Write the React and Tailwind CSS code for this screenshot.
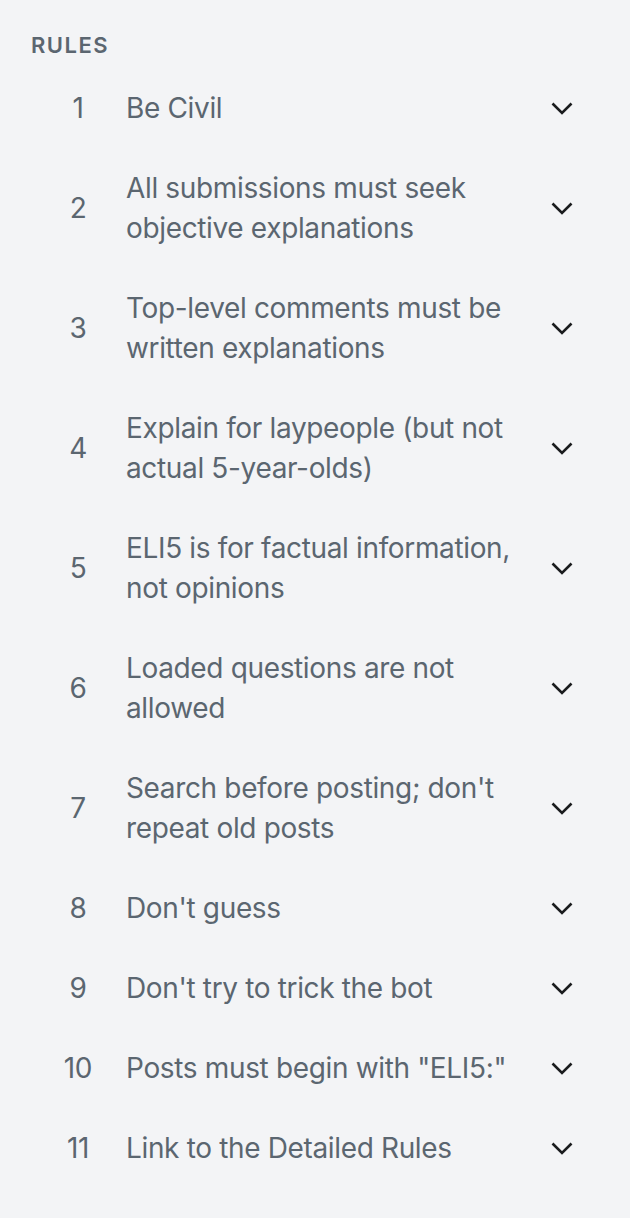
const rules = [
  'Be Civil',
  'All submissions must seek objective explanations',
  'Top-level comments must be written explanations',
  'Explain for laypeople (but not actual 5-year-olds)',
  'ELI5 is for factual information, not opinions',
  'Loaded questions are not allowed',
  "Search before posting; don't repeat old posts",
  "Don't guess",
  "Don't try to trick the bot",
  'Posts must begin with "ELI5:"',
  'Link to the Detailed Rules',
];

const Chevron = () => (
  <svg width="22" height="14" viewBox="0 0 22 14" fill="none">
    <path d="M1.5 2.5 L11 12 L20.5 2.5" stroke="#1a1c1e" strokeWidth="2.6" />
  </svg>
);

export default function App() {
  return (
    <div className="min-h-[1218px] w-[630px] bg-[#f3f4f6] pt-[33px] pb-[30px] font-['Inter',sans-serif] text-[#5b6670]">
      <h2 className="pl-[31px] text-[22px] font-semibold uppercase leading-[24px] tracking-[1.5px]">Rules</h2>
      <ul className="mt-[11px]">
        {rules.map((rule, i) => (
          <li key={i} className="flex items-center py-[20px] pl-[54px] pr-[48px]">
            <span className="w-[48px] shrink-0 text-center text-[28px] leading-[40px] tracking-[-0.35px]">{i + 1}</span>
            <span className="ml-[24px] flex-1 pr-[16px] text-[28px] leading-[40px] tracking-[-0.35px]">{rule}</span>
            <span className="flex w-[40px] shrink-0 justify-center">
              <Chevron />
            </span>
          </li>
        ))}
      </ul>
    </div>
  );
}
